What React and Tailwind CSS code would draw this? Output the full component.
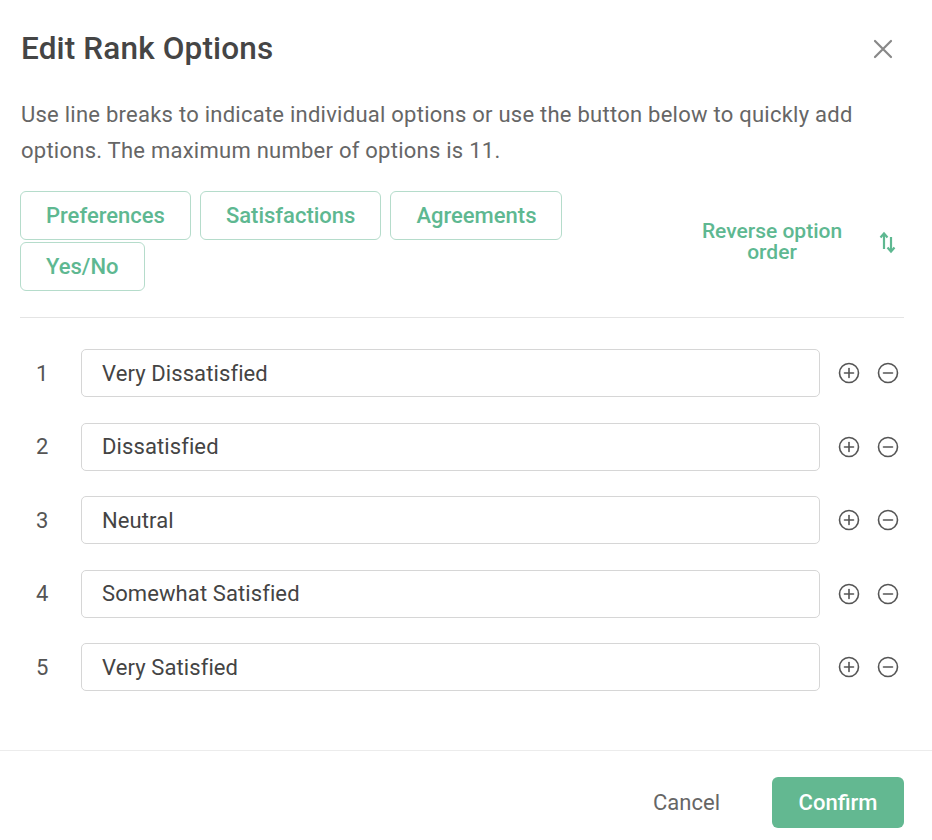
import React from "react";

const presets = ["Preferences", "Satisfactions", "Agreements", "Yes/No"];
const options = [
  "Very Dissatisfied",
  "Dissatisfied",
  "Neutral",
  "Somewhat Satisfied",
  "Very Satisfied",
];

function CircleIcon({ plus }) {
  return (
    <svg width="24" height="24" viewBox="0 0 24 24" fill="none" stroke="#555" strokeWidth="1.6" strokeLinecap="round">
      <circle cx="12" cy="12" r="9.5" />
      <path d="M7.5 12h9" />
      {plus && <path d="M12 7.5v9" />}
    </svg>
  );
}

function SortIcon() {
  return (
    <svg width="20" height="26" viewBox="0 0 20 26" fill="none" stroke="#5eb891" strokeWidth="2.2">
      <path d="M6 20V5" />
      <path d="M2.5 8.5L6 4.5l3.5 4" />
      <path d="M13 8v14" />
      <path d="M9.5 18.5L13 22.5l3.5-4" />
    </svg>
  );
}

export default function App() {
  return (
    <div
      className="w-[932px] h-[840px] bg-white text-[#444] flex flex-col"
      style={{ fontFamily: "Roboto, 'Liberation Sans', sans-serif" }}
    >
      <div className="flex items-center justify-between pl-[21px] pr-[38px] pt-[27px]">
        <h1 className="text-[31.5px] leading-[44px] font-medium tracking-[0.15px] text-[#454545]">Edit Rank Options</h1>
        <svg width="22" height="22" viewBox="0 0 22 22" stroke="#888" strokeWidth="2.2" strokeLinecap="round">
          <path d="M3 3l16 16M19 3L3 19" />
        </svg>
      </div>

      <p className="px-[21px] mt-[26px] text-[22px] leading-[36px] tracking-[0.25px] text-[#666]">
        Use line breaks to indicate individual options or use the button below to quickly add options. The maximum
        number of options is 11.
      </p>

      <div className="flex items-start justify-between pl-[20px] pr-[34px] mt-[22px]">
        <div className="flex flex-wrap gap-x-[9px] gap-y-[2px] w-[560px]">
          {presets.map((p) => (
            <button
              key={p}
              className="h-[49px] px-[25px] border border-[#b5dccb] rounded-[6px] text-[22px] font-medium text-[#5eb891] bg-white"
            >
              {p}
            </button>
          ))}
        </div>
        <div className="flex items-center gap-[24px] mt-[30px]">
          <span className="text-[21px] leading-[21px] font-medium text-[#5eb891] text-center w-[164px]">
            Reverse option order
          </span>
          <SortIcon />
        </div>
      </div>

      <div className="ml-[20px] mr-[28px] mt-[26px] border-t border-[#e4e4e4]" />

      <div className="flex flex-col gap-[25.5px] pl-[20px] pr-[32px] mt-[31px]">
        {options.map((o, i) => (
          <div key={o} className="flex items-center">
            <span className="w-[61px] pl-[16px] text-[22px] text-[#555]">{i + 1}</span>
            <div className="flex-1 h-[48px] border border-[#d6d6d6] rounded-[5px] flex items-center pl-[20px] text-[22px] tracking-[0.1px] text-[#444]">
              {o}
            </div>
            <div className="flex items-center gap-[15px] ml-[17px]">
              <CircleIcon plus />
              <CircleIcon />
            </div>
          </div>
        ))}
      </div>

      <div className="mt-auto border-t border-[#ececec] flex items-center justify-end gap-[52px] pr-[28px] pt-[26px] pb-[12px]">
        <button className="text-[22px] text-[#666]">Cancel</button>
        <button className="w-[132px] h-[51px] rounded-[6px] bg-[#63b891] text-white text-[22px] font-medium">
          Confirm
        </button>
      </div>
    </div>
  );
}
